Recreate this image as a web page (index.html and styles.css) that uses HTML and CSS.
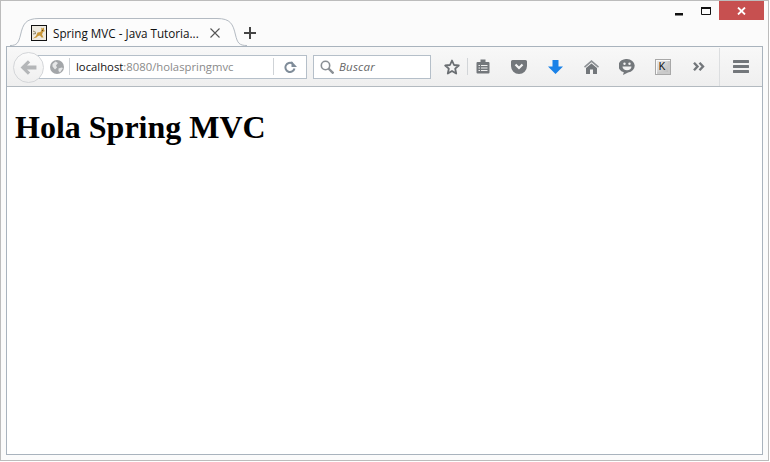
FILE: index.html
```html
<!DOCTYPE html>
<html lang="es">
<head>
<meta charset="utf-8">
<title>Spring MVC - Java Tutorial</title>
<link rel="stylesheet" href="styles.css">
</head>
<body>
<div class="window">
  <div class="titlebar">
    <div class="tab">
      <svg class="tab-shape" width="237" height="29" viewBox="0 0 237 29"><path d="M0 27.500C7 27.500 8.500 25 10.500 17 13 6 15.500 .5 29 .5H207C220.500 .5 223 6 225.500 17 227.500 25 229 27.500 237 27.500" fill="#fcfcfc" stroke="#b3bac2"/></svg>
      <svg class="favicon" width="16" height="16" viewBox="0 0 16 16"><rect x=".5" y=".5" width="15" height="15" fill="#eeeae0" stroke="#111"/><path d="M2 13.500l3-2.500 1.500-3.500 3-.5 1-2.500-.5-2 1.500 1 1.500-1 0 2.500 1 1-2 1-1 2.500 1.500 3h-2l-1.500-2-2 .5-1.500 1.500z" fill="#c8973a"/><path d="M2 6l3 1.500M2 9l3-.5" stroke="#8b8468"/><path d="M11 5.500h.8" stroke="#3a2c10"/></svg>
      <span class="tab-title">Spring MVC - Java Tutoria...</span>
      <svg class="tab-close" width="10" height="10" viewBox="0 0 10 10"><path d="M.5.500l9 9M9.500.500l-9 9" stroke="#555" stroke-width="1.100"/></svg>
    </div>
    <svg class="newtab" width="12" height="12" viewBox="0 0 12 12"><path d="M6 0v12M0 6h12" stroke="#444" stroke-width="2"/></svg>
    <div class="controls">
      <span class="ctl min"><svg width="8" height="3" viewBox="0 0 8 3"><rect width="8" height="2.500" fill="#111"/></svg></span>
      <span class="ctl max"><svg width="10" height="8" viewBox="0 0 10 8"><path d="M.5.500h9v7h-9z" fill="none" stroke="#111"/><rect width="10" height="2" fill="#111"/></svg></span>
      <span class="ctl close"><svg width="9" height="8" viewBox="0 0 9 8"><path d="M1 .5l7 7M8 .5l-7 7" stroke="#fff" stroke-width="1.800"/></svg></span>
    </div>
  </div>
  <div class="frame">
    <div class="toolbar">
      <div class="back"><svg width="17" height="15" viewBox="0 0 15 13"><path d="M7 0L.5 6.500 7 13l2-2-2.800-2.800H14.500V4.800H6.200L9 2z" fill="#b4b6b8"/></svg></div>
      <div class="urlbar">
        <svg class="globe" width="14" height="14" viewBox="0 0 14 14"><circle cx="7" cy="7" r="7" fill="#a3a6a9"/><path d="M2.500 4l3-2.500 2.500 1.500-2 2.500 1 2-2 2-2.500-3zM8.500 8.500l3-1 1.500.5-3 4.500-1.500-1.500z" fill="#e6e7e8"/></svg>
        <span class="url"><span class="host">localhost</span>:8080/holaspringmvc</span>
        <svg class="reload" width="13" height="12" viewBox="0 0 13 12"><path d="M10.500 7.500A4.600 4.600 0 1 1 8.500 2.500" fill="none" stroke="#7f8c99" stroke-width="2"/><path d="M7.500 0v6H13z" fill="#7f8c99"/></svg>
      </div>
      <div class="search">
        <svg width="14" height="14" viewBox="0 0 14 14"><circle cx="5.500" cy="5.500" r="4.200" fill="none" stroke="#8a8f94" stroke-width="1.600"/><path d="M8.500 8.500l5 5" stroke="#8a8f94" stroke-width="2.400"/></svg>
        <span class="search-text">Buscar</span>
      </div>
      <div class="icons">
        <span class="ico star"><svg width="16" height="16" viewBox="0 0 16 16"><path d="M8 1.500l2 4.500 4.800.5-3.600 3.200 1 4.800L8 12l-4.200 2.500 1-4.800L1.200 6.500 6 6z" fill="#f2f2f2" stroke="#6a6e72" stroke-width="1.800" stroke-linejoin="round"/></svg></span>
        <span class="sep"></span>
        <span class="ico"><svg width="14" height="15" viewBox="0 0 14 15"><path d="M1.500 3h11a1 1 0 0 1 1 1v9.500a1 1 0 0 1-1 1h-11a1 1 0 0 1-1-1V4a1 1 0 0 1 1-1z" fill="#73777b"/><rect x="4.500" y=".5" width="5" height="3.500" fill="#73777b"/><path d="M2.500 6.500h9M2.500 9h9M2.500 11.500h9" stroke="#efefef"/><path d="M4.500 5v8" stroke="#73777b"/></svg></span>
        <span class="ico"><svg width="16" height="14" viewBox="0 0 16 14"><path d="M1.500 0h13A1.500 1.500 0 0 1 16 1.500V6A8 8 0 0 1 0 6V1.500A1.500 1.500 0 0 1 1.500 0z" fill="#73777b"/><path d="M4.500 4.500L8 8l3.500-3.500" fill="none" stroke="#f4f4f4" stroke-width="2.200"/></svg></span>
        <span class="ico"><svg width="15" height="14" viewBox="0 0 15 14"><path d="M4.500 0h6v6.500H15L7.500 14 0 6.500h4.500z" fill="#1a82e8"/></svg></span>
        <span class="ico"><svg width="15" height="14" viewBox="0 0 15 14"><path d="M7.500 0L15 6.500l-1 1.200-6.500-5.500L1 7.700 0 6.500z" fill="#8d9195"/><path d="M7.500 3.500L13 8v6H9V9.500H6V14H2V8z" fill="#73777b"/></svg></span>
        <span class="ico"><svg width="16" height="16" viewBox="0 0 16 16"><path d="M8 0a8 6.800 0 0 1 1 13.500L4 16l.8-2.800A8 6.800 0 0 1 8 0z" fill="#73777b"/><circle cx="5.500" cy="4.800" r="1.200" fill="#f2f2f2"/><circle cx="10.500" cy="4.800" r="1.200" fill="#f2f2f2"/><path d="M3.500 7.500h9a4.500 3.800 0 0 1-9 0z" fill="#f2f2f2"/></svg></span>
        <span class="ico"><span class="key">K</span></span>
        <span class="ico"><svg width="12" height="9" viewBox="0 0 12 9"><path d="M1 .8l3.500 3.700L1 8.200M6.500 .8l3.500 3.700-3.500 3.700" fill="none" stroke="#73777b" stroke-width="2.400"/></svg></span>
        <span class="sep tall"></span>
        <span class="ico menu"><svg width="16" height="13" viewBox="0 0 16 13"><path d="M1 0h14a1 1 0 0 1 0 3H1a1 1 0 0 1 0-3zM1 5h14a1 1 0 0 1 0 3H1a1 1 0 0 1 0-3zM1 10h14a1 1 0 0 1 0 3H1a1 1 0 0 1 0-3z" fill="#73777b"/></svg></span>
      </div>
    </div>
    <main class="page">
      <h1>Hola Spring MVC</h1>
    </main>
  </div>
</div>
</body>
</html>
```
FILE: styles.css
```css
* { box-sizing: border-box; }
html, body { margin: 0; height: 100%; overflow: hidden; }
body { background: #fff; }
.window {
  width: 769px;
  height: 461px;
  border: 1px solid #bcbcbc;
  background: #fbfbfb;
  padding: 0 5px 5px;
  display: flex;
  flex-direction: column;
  font-family: "Open Sans", "Liberation Sans", sans-serif;
}
.titlebar {
  height: 45px;
  flex: none;
  display: flex;
  align-items: flex-end;
  padding-left: 4px;
}
.tab {
  width: 237px;
  height: 29px;
  margin-bottom: -1px;
  position: relative;
  display: flex;
  align-items: center;
  padding: 0 27px 0 21px;
  z-index: 1;
  flex: none;
}
.tab-shape { position: absolute; left: 0; top: 0; }
.favicon { position: relative; flex: none; }
.tab-title {
  position: relative;
  margin-left: 6px;
  font-size: 11.700px;
  color: #111;
  white-space: nowrap;
  flex: 1;
}
.tab-close { position: relative; flex: none; }
.newtab { margin: 0 0 7px -3px; flex: none; }
.controls {
  margin-left: auto;
  align-self: flex-start;
  display: flex;
  align-items: flex-start;
}
.ctl {
  height: 19px;
  display: flex;
  justify-content: center;
  flex: none;
}
.min { width: 8px; padding-top: 12px; }
.max { width: 10px; margin-left: 18px; padding-top: 6px; }
.close {
  background: #c75050;
  width: 45px;
  margin: 0 -1px 0 8px;
  align-items: center;
}
.frame {
  flex: 1;
  display: flex;
  flex-direction: column;
  border: 1px solid #a9b3bd;
  min-height: 0;
}
.toolbar {
  height: 40px;
  flex: none;
  display: flex;
  align-items: center;
  background: linear-gradient(#f8f8f8, #efefef);
  border-bottom: 1px solid #b3bac0;
  padding-left: 6px;
}
.back {
  width: 31px;
  height: 31px;
  border-radius: 50%;
  background: linear-gradient(#fbfbfb, #efefef);
  border: 1px solid #d4d6d9;
  display: flex;
  align-items: center;
  justify-content: center;
  position: relative;
  z-index: 1;
  flex: none;
  margin-top: 1px;
}
.urlbar {
  width: 275px;
  height: 24px;
  margin-left: -12px;
  background: #fff;
  border: 1px solid #b5bfc9;
  display: flex;
  align-items: center;
  padding-left: 17px;
  flex: none;
}
.globe { flex: none; }
.url {
  margin-left: 5px;
  padding-left: 6px;
  border-left: 1px solid #cfd3d7;
  border-right: 1px solid #cfd3d7;
  width: 205px;
  flex: none;
  font-size: 11.300px;
  line-height: 17px;
  color: #8a8a8a;
  white-space: nowrap;
  overflow: hidden;
}
.host { color: #111; }
.reload { margin-left: 10px; flex: none; }
.search {
  width: 118px;
  height: 24px;
  margin-left: 6px;
  background: #fff;
  border: 1px solid #b5bfc9;
  display: flex;
  align-items: center;
  padding-left: 6px;
  gap: 5px;
  flex: none;
}
.search-text { font-size: 11.500px; font-style: italic; color: #666; letter-spacing: .2px; }
.icons {
  display: flex;
  align-items: center;
  height: 100%;
  margin-left: 6px;
}
.ico {
  width: 36px;
  display: flex;
  align-items: center;
  justify-content: center;
  flex: none;
}
.star { width: 30px; }
.sep { width: 1px; height: 17px; background: #d2d5d8; flex: none; margin-right: -3px; }
.sep.tall { height: 38px; margin-left: 2px; margin-right: 0; background: #dcdee0; }
.menu { width: 42px; }
.key {
  width: 16px;
  height: 16px;
  background: linear-gradient(135deg, #ececec, #b8b8b8);
  border: 1px solid #a8a8a8;
  box-shadow: inset 1px 1px 0 #fafafa, inset -2px -2px 0 #cacaca;
  font-size: 10px;
  line-height: 13px;
  padding-right: 2px;
  text-align: center;
  color: #111;
  font-family: "Liberation Sans", sans-serif;
}
.page {
  flex: 1;
  background: #fff;
  padding: 8px;
  min-height: 0;
}
h1 {
  margin: 14px 0 0;
  font-family: "Liberation Serif", serif;
  font-size: 32px;
  font-weight: bold;
  color: #000;
}
```
